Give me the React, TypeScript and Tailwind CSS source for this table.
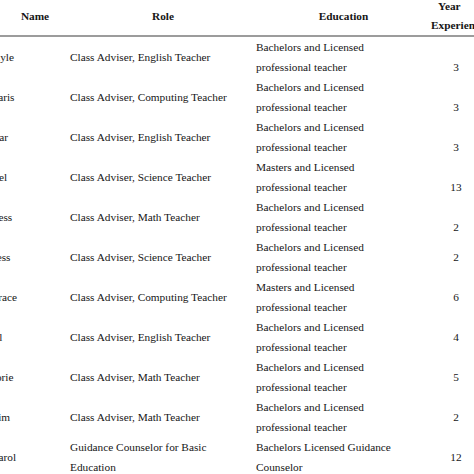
const rows = [
  { name: "Kyle", shift: "-ml-[8px]", role: ["Class Adviser, English Teacher"], edu: "Bachelors", years: "3", bottom: true },
  { name: "Charis", shift: "-ml-[15px]", role: ["Class Adviser, Computing Teacher"], edu: "Bachelors", years: "3", bottom: true },
  { name: "Edgar", shift: "-ml-[19px]", role: ["Class Adviser, English Teacher"], edu: "Bachelors", years: "3", bottom: true },
  { name: "Daniel", shift: "-ml-[23px]", role: ["Class Adviser, Science Teacher"], edu: "Masters", years: "13", bottom: true },
  { name: "Agness", shift: "-ml-[21px]", role: ["Class Adviser, Math Teacher"], edu: "Bachelors", years: "2", bottom: true },
  { name: "Bless", shift: "-ml-[14px]", role: ["Class Adviser, Science Teacher"], edu: "Bachelors", years: "2", bottom: false },
  { name: "Grace", shift: "-ml-[10px]", role: ["Class Adviser, Computing Teacher"], edu: "Masters", years: "6", bottom: false },
  { name: "Carl", shift: "-ml-[17px]", role: ["Class Adviser, English Teacher"], edu: "Bachelors", years: "4", bottom: false },
  { name: "Marjorie", shift: "-ml-[26px]", role: ["Class Adviser, Math Teacher"], edu: "Bachelors", years: "5", bottom: false },
  { name: "Kim", shift: "-ml-[10px]", role: ["Class Adviser, Math Teacher"], edu: "Bachelors", years: "2", bottom: false },
  { name: "Carol", shift: "-ml-[9px]", role: ["Guidance Counselor for Basic", "Education"], edu: "Guidance", years: "12", bottom: false },
];

function eduLines(kind: string) {
  if (kind === "Guidance") return ["Bachelors Licensed Guidance", "Counselor"];
  return [`${kind} and Licensed`, "professional teacher"];
}

export default function App() {
  return (
    <div className="w-[474px] h-[474px] overflow-hidden bg-white text-[#161616] font-[Liberation_Serif,serif] text-[11.3px] leading-[20px]">
      <div className="w-[481px] -mt-[3px]">
        {/* header */}
        <div className="grid grid-cols-[70px_186px_175px_50px] border-b-2 border-[#9c9c9c] font-bold leading-[19px] h-[40px]">
          <div className="flex items-center justify-center pt-[1px]">Name</div>
          <div className="flex items-center justify-center pt-[1px]">Role</div>
          <div className="flex items-center justify-center pt-[1px]">Education</div>
          <div className="flex flex-col">
            <span className="pl-[7px]">Year</span>
            <span className="whitespace-nowrap">Experience</span>
          </div>
        </div>

        {rows.map((r) => (
          <div key={r.name} className="grid grid-cols-[70px_186px_175px_50px] h-[40px]">
            <div className="flex items-center overflow-visible whitespace-nowrap">
              <span className={r.shift}>{r.name}</span>
            </div>
            <div className="flex flex-col justify-center">
              {r.role.map((line) => (
                <span key={line} className="whitespace-nowrap">{line}</span>
              ))}
            </div>
            <div className="flex flex-col justify-center">
              {eduLines(r.edu).map((line) => (
                <span key={line} className="whitespace-nowrap">{line}</span>
              ))}
            </div>
            <div className={`flex justify-center ${r.bottom ? "items-end" : "items-center"}`}>
              {r.years}
            </div>
          </div>
        ))}
      </div>
    </div>
  );
}
